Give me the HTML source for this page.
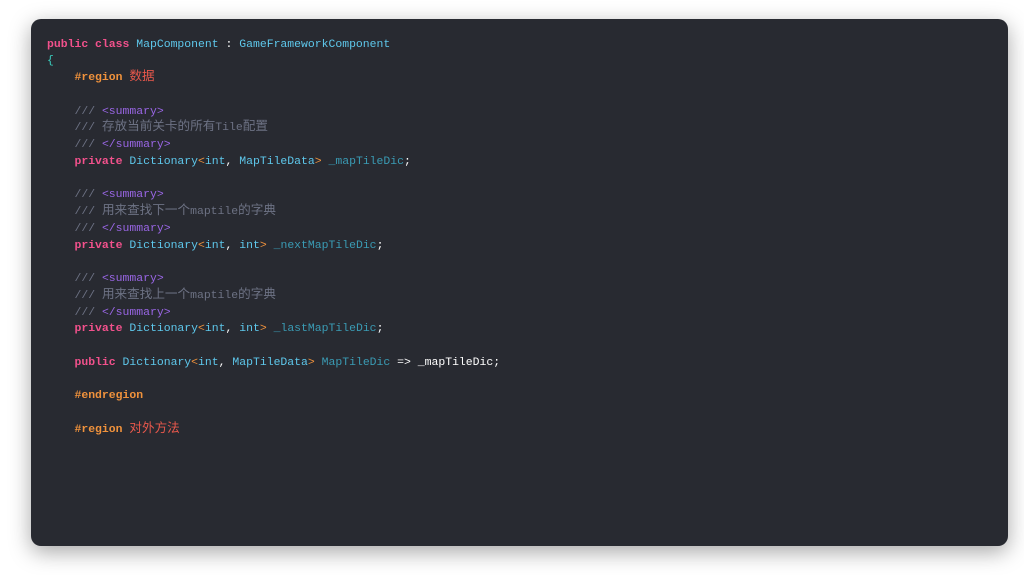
<!DOCTYPE html>
<html><head><meta charset="utf-8"><style>
html,body{margin:0;padding:0;background:#fff;width:1024px;height:575px;overflow:hidden}
.card{position:absolute;left:31px;top:19px;width:977px;height:527px;background:#282a31;border-radius:10px;box-shadow:0 6px 22px rgba(0,0,0,0.35)}
pre{margin:0;position:absolute;left:47px;top:36.5px;font-family:"Liberation Mono","Noto Sans CJK SC",monospace;font-size:11.45px;line-height:16.75px;color:#d8dae0;white-space:pre}
.z{font-size:12.6px;line-height:10px}
.k{color:#f2518c;font-weight:bold}
.t{color:#5ec8ec}
.o{color:#f0923c;font-weight:bold}
.r{color:#e8584c}
.c{color:#6d7284}
.s{color:#9a66e6}
.f{color:#3a9bb4}
.w{color:#ffffff}
.cy{color:#3ad0c0}
.a{color:#f0923c}
</style></head><body>
<div class="card"></div>
<pre><span class="k">public class</span> <span class="t">MapComponent</span> <span class="w">:</span> <span class="t">GameFrameworkComponent</span>
<span class="cy">{</span>
    <span class="o">#region</span> <span class="r z">数据</span>

    <span class="c">///</span> <span class="s">&lt;summary&gt;</span>
    <span class="c">/// <span class="z">存放当前关卡的所有</span>Tile<span class="z">配置</span></span>
    <span class="c">///</span> <span class="s">&lt;/summary&gt;</span>
    <span class="k">private</span> <span class="t">Dictionary</span><span class="a">&lt;</span><span class="t">int</span><span class="w">,</span> <span class="t">MapTileData</span><span class="a">&gt;</span> <span class="f">_mapTileDic</span><span class="w">;</span>

    <span class="c">///</span> <span class="s">&lt;summary&gt;</span>
    <span class="c">/// <span class="z">用来查找下一个</span>maptile<span class="z">的字典</span></span>
    <span class="c">///</span> <span class="s">&lt;/summary&gt;</span>
    <span class="k">private</span> <span class="t">Dictionary</span><span class="a">&lt;</span><span class="t">int</span><span class="w">,</span> <span class="t">int</span><span class="a">&gt;</span> <span class="f">_nextMapTileDic</span><span class="w">;</span>

    <span class="c">///</span> <span class="s">&lt;summary&gt;</span>
    <span class="c">/// <span class="z">用来查找上一个</span>maptile<span class="z">的字典</span></span>
    <span class="c">///</span> <span class="s">&lt;/summary&gt;</span>
    <span class="k">private</span> <span class="t">Dictionary</span><span class="a">&lt;</span><span class="t">int</span><span class="w">,</span> <span class="t">int</span><span class="a">&gt;</span> <span class="f">_lastMapTileDic</span><span class="w">;</span>

    <span class="k">public</span> <span class="t">Dictionary</span><span class="a">&lt;</span><span class="t">int</span><span class="w">,</span> <span class="t">MapTileData</span><span class="a">&gt;</span> <span class="f">MapTileDic</span> <span class="w">=&gt; _mapTileDic;</span>

    <span class="o">#endregion</span>

    <span class="o">#region</span> <span class="r z">对外方法</span>
</pre>
</body></html>
